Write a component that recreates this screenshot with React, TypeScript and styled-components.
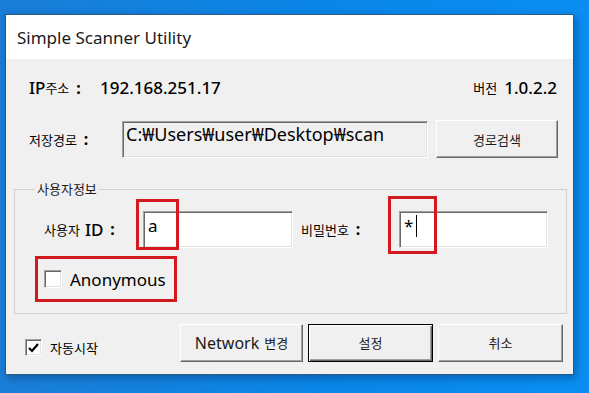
import styled, { createGlobalStyle } from "styled-components";

const GlobalStyle = createGlobalStyle`
    html, body {
        margin: 0;
        padding: 0;
    }
    body {
        width: 589px;
        height: 393px;
        overflow: hidden;
        background: linear-gradient(90deg, #1a7ed6 0%, #0a86e8 55%, #0a8ef2 100%);
        font-family: "Noto Sans", "Noto Sans CJK KR", sans-serif;
        color: #000;
    }
`;

const Window = styled.div`
    box-sizing: border-box;
    margin: 14px 0 0 5px;
    width: 569px;
    height: 361px;
    border: 1px solid #2d5a80;
    background: #f0f0f0;
    display: flex;
    flex-direction: column;
    box-shadow: 2px 3px 8px rgba(0, 20, 60, 0.35);
`;

const TitleBar = styled.div`
    height: 44px;
    background: #fff;
    display: flex;
    align-items: center;
    padding-left: 11px;
    font-size: 17px;
    color: #1a1a1a;
`;

const InfoRow = styled.div`
    height: 57px;
    display: flex;
    align-items: center;
    justify-content: space-between;
    padding: 0 16px 0 23px;
`;

const Group = styled.div`
    display: flex;
    align-items: center;
`;

const Label = styled.div<{ $width?: number }>`
    width: ${p => (p.$width ? `${p.$width}px` : "auto")};
    flex-shrink: 0;
    display: flex;
    align-items: center;
    white-space: nowrap;
`;

const Ko = styled.span`
    font-size: 13px;
`;

const Big = styled.span`
    font-size: 17px;
    font-weight: 500;
`;

const Colon = styled.span`
    font-size: 16px;
    font-weight: 700;
    margin-left: 7px;
`;

const Value = styled.span`
    font-size: 17px;
    font-weight: 500;
`;

const PathRow = styled.div`
    margin-top: 4px;
    height: 38px;
    display: flex;
    align-items: center;
    padding-left: 23px;
`;

const sunken = `
    box-sizing: border-box;
    border-style: solid;
    border-width: 1px;
    border-color: #a0a0a0 #fff #fff #a0a0a0;
    box-shadow: inset 1px 1px 0 #6a6a6a, inset -1px -1px 0 #e3e3e3;
`;

const Field = styled.div<{ $width: number; $white?: boolean }>`
    ${sunken}
    position: relative;
    flex-shrink: 0;
    width: ${p => p.$width}px;
    height: 37px;
    background: ${p => (p.$white ? "#fff" : "#f0f0f0")};
    padding: ${p => (p.$white ? "2px 0 0 4px" : "0 0 0 3px")};
    font-size: ${p => (p.$white ? 17 : 18)}px;
    white-space: nowrap;
    overflow: visible;
`;

const Button = styled.div<{ $width: number; $default?: boolean }>`
    box-sizing: border-box;
    flex-shrink: 0;
    width: ${p => p.$width}px;
    height: 38px;
    display: flex;
    align-items: center;
    justify-content: center;
    background: #f0f0f0;
    border-style: solid;
    border-width: 1px;
    border-color: ${p => (p.$default ? "#000" : "#fff #696969 #696969 #fff")};
    box-shadow: ${p =>
        p.$default
            ? "inset 1px 1px 0 #fff, inset -1px -1px 0 #696969, inset -2px -2px 0 #a0a0a0"
            : "inset -1px -1px 0 #a0a0a0"};
    font-size: 13px;
    color: #1a1a1a;
`;

const Fieldset = styled.fieldset`
    box-sizing: border-box;
    margin: 22px 0 0 8px;
    width: 553px;
    padding: 12px 0 11px 29px;
    border: 1px solid #d0d0d0;
    min-inline-size: 0;
`;

const Legend = styled.legend`
    font-size: 13px;
    line-height: 18px;
    padding: 0 2px;
    margin-left: -9px;
    color: #1a1a1a;
`;

const IdRow = styled.div`
    display: flex;
    align-items: center;
    height: 38px;
`;

const Highlight = styled.div<{ $l: number; $t: number; $w: number; $h: number }>`
    position: absolute;
    left: ${p => p.$l}px;
    top: ${p => p.$t}px;
    width: ${p => p.$w}px;
    height: ${p => p.$h}px;
    box-sizing: border-box;
    border: 3px solid #d2191e;
    pointer-events: none;
`;

const Caret = styled.span`
    display: inline-block;
    width: 1px;
    height: 22px;
    background: #000;
    vertical-align: top;
    margin: 1px 0 0 3px;
`;

const AnonRow = styled.div`
    position: relative;
    box-sizing: border-box;
    margin: 8px 0 0 -9px;
    width: 142px;
    height: 46px;
    display: flex;
    align-items: center;
    padding-left: 9px;
    gap: 8px;
    font-size: 17px;
`;

const Box = styled.span<{ $size: number }>`
    box-sizing: border-box;
    width: ${p => p.$size}px;
    height: ${p => p.$size}px;
    background: #fff;
    border-style: solid;
    border-width: 1px;
    border-color: #a0a0a0 #fff #fff #a0a0a0;
    box-shadow: inset 1px 1px 0 #696969, inset -1px -1px 0 #e3e3e3;
    display: flex;
    align-items: center;
    justify-content: center;
`;

const BottomRow = styled.div`
    margin-top: 9px;
    height: 39px;
    display: flex;
    align-items: center;
    padding: 0 9px 0 19px;
`;

const AutoStart = styled.div`
    display: flex;
    align-items: center;
    gap: 8px;
    font-size: 13px;
    margin-top: 10px;
    width: 155px;
`;

const Buttons = styled.div`
    display: flex;
    gap: 5px;
`;

export default function App() {
    return (
        <>
            <GlobalStyle />
            <Window>
                <TitleBar>Simple Scanner Utility</TitleBar>
                <InfoRow>
                    <Group>
                        <Label $width={71}>
                            <Big>IP</Big>
                            <Ko>주소</Ko>
                            <Colon>:</Colon>
                        </Label>
                        <Value>192.168.251.17</Value>
                    </Group>
                    <Group>
                        <Ko>버전</Ko>
                        <Value style={{ marginLeft: 7 }}>1.0.2.2</Value>
                    </Group>
                </InfoRow>
                <PathRow>
                    <Label $width={93}>
                        <Ko>저장경로</Ko>
                        <Colon>:</Colon>
                    </Label>
                    <Field $width={306}>C:₩Users₩user₩Desktop₩scan</Field>
                    <Button $width={122} style={{ marginLeft: 8 }}>경로검색</Button>
                </PathRow>
                <Fieldset>
                    <Legend>사용자정보</Legend>
                    <IdRow>
                        <Label $width={99}>
                            <Ko>사용자</Ko>
                            <Big style={{ marginLeft: 5 }}>ID</Big>
                            <Colon>:</Colon>
                        </Label>
                        <Field $width={150} $white>
                            a
                            <Highlight $l={-8} $t={-13} $w={43} $h={51} />
                        </Field>
                        <Label $width={98} style={{ marginLeft: 8 }}>
                            <Ko>비밀번호</Ko>
                            <Colon>:</Colon>
                        </Label>
                        <Field $width={149} $white>
                            *<Caret />
                            <Highlight $l={-12} $t={-16} $w={49} $h={58} />
                        </Field>
                    </IdRow>
                    <AnonRow>
                        <Box $size={18} />
                        Anonymous
                        <Highlight $l={0} $t={0} $w={142} $h={46} />
                    </AnonRow>
                </Fieldset>
                <BottomRow>
                    <AutoStart>
                        <Box $size={17}>
                            <svg width="11" height="10" viewBox="0 0 11 10">
                                <path d="M1 5 L4 8 L10 1" stroke="#000" strokeWidth="2.2" fill="none" />
                            </svg>
                        </Box>
                        자동시작
                    </AutoStart>
                    <Buttons>
                        <Button $width={123}>
                            <span style={{ fontSize: 16 }}>Network</span>
                            <span style={{ marginLeft: 5 }}>변경</span>
                        </Button>
                        <Button $width={125} $default>설정</Button>
                        <Button $width={125}>취소</Button>
                    </Buttons>
                </BottomRow>
            </Window>
        </>
    );
}
